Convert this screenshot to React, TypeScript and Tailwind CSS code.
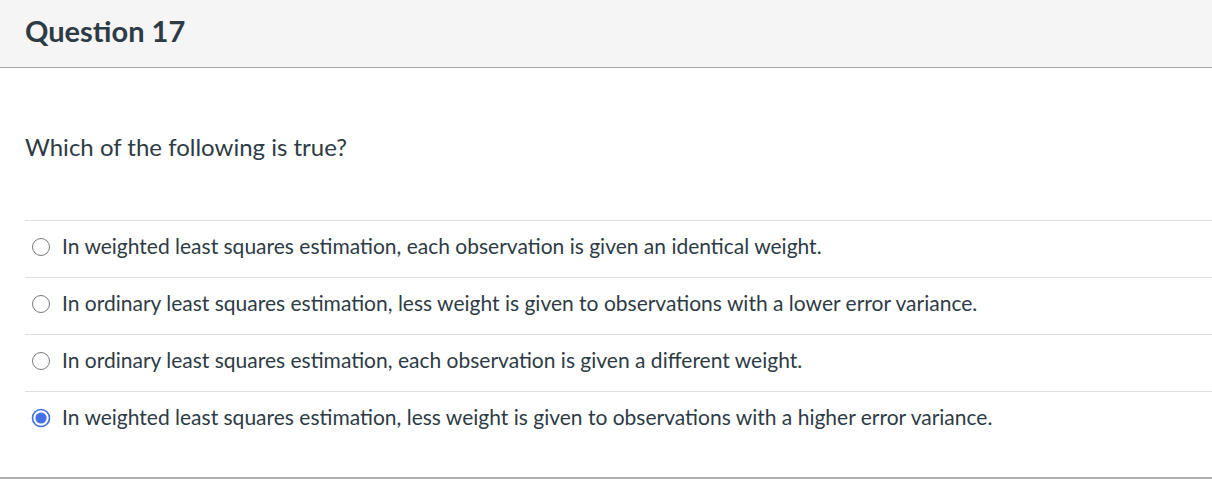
const answers = [
  { text: "In weighted least squares estimation, each observation is given an identical weight.", checked: false },
  { text: "In ordinary least squares estimation, less weight is given to observations with a lower error variance.", checked: false },
  { text: "In ordinary least squares estimation, each observation is given a different weight.", checked: false },
  { text: "In weighted least squares estimation, less weight is given to observations with a higher error variance.", checked: true },
]

function Radio({ checked }: { checked: boolean }) {
  return (
    <svg width="20" height="20" viewBox="0 0 20 20" className="shrink-0">
      {checked ? (
        <>
          <circle cx="10" cy="10" r="8.5" fill="#fff" stroke="#3f6fe0" strokeWidth="1.6" />
          <circle cx="10" cy="10" r="5.6" fill="#4470e8" />
        </>
      ) : (
        <circle cx="10" cy="10" r="8.5" fill="#fff" stroke="#7a7a7a" strokeWidth="1" />
      )}
    </svg>
  )
}

export default function App() {
  return (
    <div className="w-[1212px] h-[492px] bg-white text-[#2d3b45] font-['Lato','Liberation_Sans',sans-serif]">
      <div className="h-[68px] bg-[#f5f5f5] border-b border-[#a5a5a5] px-[25px] flex items-center">
        <h2 className="text-[29px] font-bold leading-none -mt-[6px]">Question 17</h2>
      </div>
      <div className="border-b-2 border-[#b0b0b0] pb-[29px]">
        <p className="pl-[25px] pt-[64px] pb-[58px] text-[24px] leading-[30px]">Which of the following is true?</p>
        <ul className="ml-[25px]">
          {answers.map((a) => (
            <li key={a.text} className="h-[57px] border-t border-[#e0e0e0] flex items-center gap-[11px] pl-[6px] pb-[4px]">
              <Radio checked={a.checked} />
              <span className="text-[21px] leading-none -mt-[4px]">{a.text}</span>
            </li>
          ))}
        </ul>
      </div>
    </div>
  )
}
